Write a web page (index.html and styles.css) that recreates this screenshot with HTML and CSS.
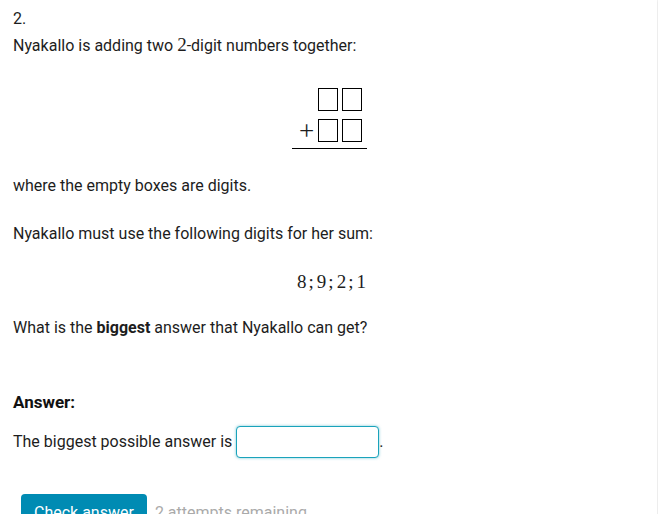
FILE: index.html
```html
<!DOCTYPE html>
<html lang="en">
<head>
    <meta charset="UTF-8" />
    <meta name="viewport" content="width=device-width, initial-scale=1.0" />
    <title>Question 2</title>
    <link rel="stylesheet" href="styles.css">
</head>
<body>
    <div class="pregunta">
        <p class="numero">2.</p>
        <p>Nyakallo is adding two <span class="mat">2</span>-digit numbers together:</p>

        <div class="bloque-mat">
            <table class="suma">
                <tr>
                    <td></td>
                    <td class="cajas"><span class="caja"></span><span class="caja"></span></td>
                </tr>
                <tr>
                    <td class="signo">+</td>
                    <td class="cajas"><span class="caja"></span><span class="caja"></span></td>
                </tr>
            </table>
        </div>

        <p class="sep-sup">where the empty boxes are digits.</p>
        <p>Nyakallo must use the following digits for her sum:</p>

        <div class="bloque-mat digitos">8<span class="pc">;</span>9<span class="pc">;</span>2<span class="pc">;</span>1</div>

        <p>What is the <strong>biggest</strong> answer that Nyakallo can get?</p>

        <h4 class="respuesta-titulo">Answer:</h4>
        <p class="respuesta">The biggest possible answer is <input type="text" class="campo">.</p>

        <div class="acciones">
            <button class="btn-comprobar">Check answer</button>
            <span class="intentos">2 attempts remaining</span>
        </div>
    </div>
</body>
</html>
```

FILE: styles.css
```css
body {
    margin: 0;
    background: #fff;
    font-family: Roboto, "Liberation Sans", sans-serif;
    font-size: 16px;
    color: #1d1d1d;
}
.pregunta {
    box-shadow: 0 -1px 4px rgba(0,0,0,0.18);
    margin: 0 1px 0 0;
    padding: 7px 13px 40px;
    min-height: 520px;
}
p {
    margin: 0 0 24px;
    line-height: 24px;
}
p.numero {
    margin: 0 0 2px;
}
.mat {
    font-family: "Liberation Serif", "DejaVu Serif", serif;
    font-size: 19px;
}
.bloque-mat {
    display: flex;
    justify-content: center;
    font-family: "Liberation Serif", "DejaVu Serif", serif;
    font-size: 18px;
}
.suma {
    border-collapse: collapse;
    margin: 6px 0 0 2px;
}
.suma td {
    padding: 0;
    height: 31px;
    vertical-align: top;
    text-align: right;
}
.suma td.cajas {
    padding-right: 5px;
}
.suma tr:last-child td {
    border-bottom: 1.5px solid #000;
    height: 29px;
}
.suma td.signo {
    font-family: "Liberation Serif", serif;
    font-size: 27px;
    line-height: 24px;
    padding: 0 4px 0 7px;
}
.caja {
    display: inline-block;
    width: 18px;
    height: 21px;
    border: 1px solid #000;
    margin-left: 4px;
    vertical-align: top;
}
.caja:first-child {
    margin-left: 0;
}
.sep-sup {
    margin-top: 25px;
}
.digitos {
    margin: 0 0 22px 6px;
    line-height: 24px;
    font-size: 19px;
}
.pc {
    margin: 0 3px 0 2px;
}
.respuesta-titulo {
    margin: 50px 0 12px;
    font-size: 17px;
    font-weight: bold;
    line-height: 24px;
    color: #111;
}
.respuesta {
    display: flex;
    align-items: center;
}
.campo {
    box-sizing: border-box;
    width: 143px;
    height: 32px;
    margin-left: 4px;
    padding: 0;
    border: 1px solid #1aa3bb;
    border-radius: 4px;
    box-shadow: 0 0 3px rgba(26,163,187,0.6);
    outline: none;
}
.acciones {
    display: flex;
    align-items: flex-start;
    gap: 8px;
    margin: 36px 0 0 8px;
}
.btn-comprobar {
    background: #008bb3;
    color: #fff;
    border: none;
    border-radius: 4px;
    padding: 9px 13px;
    font-family: Roboto, "Liberation Sans", sans-serif;
    font-size: 16px;
    cursor: pointer;
}
.intentos {
    color: #aaa;
    font-size: 16px;
    margin-top: 9px;
}
```
